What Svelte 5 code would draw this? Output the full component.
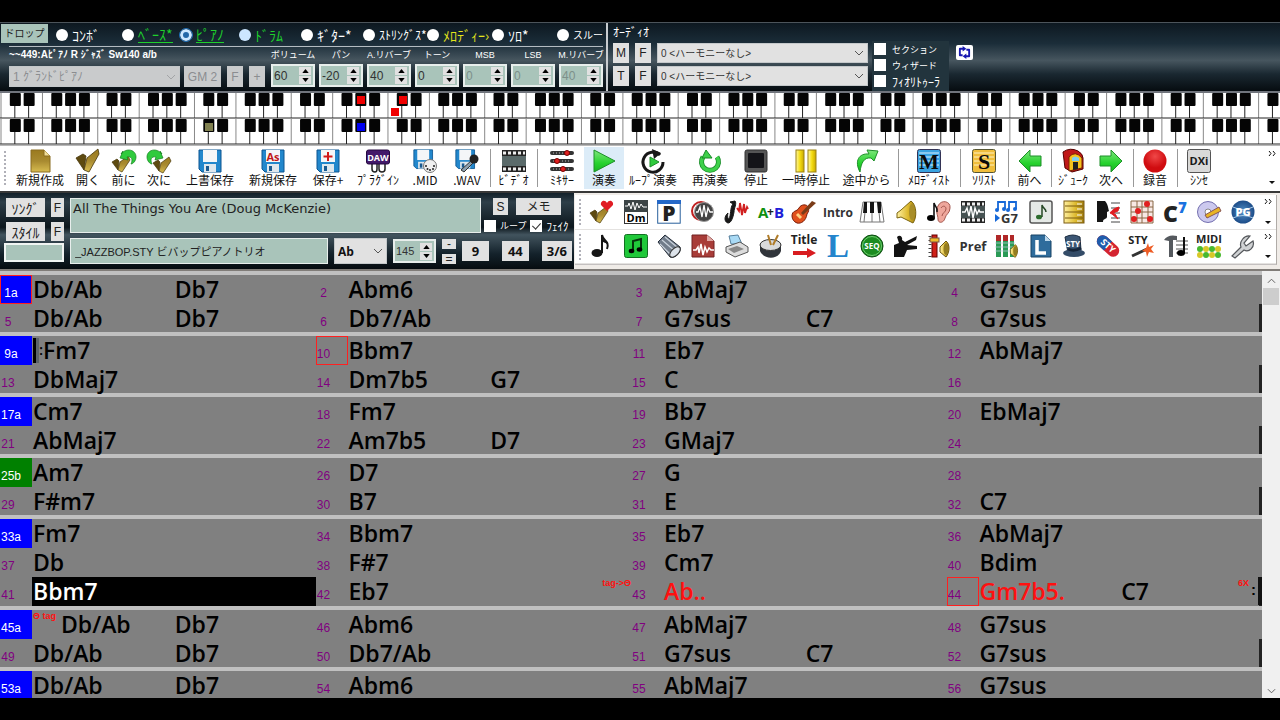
<script>
  const parts = [
    { id: 'combo', name: 'ｺﾝﾎﾞ', tone: 'plain' },
    { id: 'bass', name: 'ﾍﾞｰｽ*', tone: 'green', line: true },
    { id: 'piano', name: 'ﾋﾟｱﾉ', tone: 'green', line: true },
    { id: 'drums', name: 'ﾄﾞﾗﾑ', tone: 'green', hover: true },
    { id: 'guitar', name: 'ｷﾞﾀｰ*', tone: 'plain' },
    { id: 'strings', name: 'ｽﾄﾘﾝｸﾞｽ*', tone: 'plain', small: true },
    { id: 'melody', name: 'ﾒﾛﾃﾞｨｰ›', tone: 'yellow' },
    { id: 'solo', name: 'ｿﾛ*', tone: 'plain' },
    { id: 'thru', name: 'スルー', tone: 'plain', thin: true }
  ];
  let part = 'piano';

  const knobs = [
    { name: 'ボリューム', value: '60' },
    { name: 'パン', value: '-20' },
    { name: 'A.リバーブ', value: '40' },
    { name: 'トーン', value: '0' },
    { name: 'MSB', value: '0', off: true },
    { name: 'LSB', value: '0', off: true },
    { name: 'M.リバーブ', value: '40', off: true }
  ];

  const checks = ['セクション', 'ウィザード', 'ﾌｨｵﾘﾄｩｰﾗ'];

  // keyboards: 7 white keys to an octave
  const keyWidth = 13.82;
  const whites = Array.from({ length: 93 }, (_, i) => 1 + i * keyWidth);
  const blacks = whites.map((x, i) => ({ x, n: i % 7 })).filter((k) => k.n !== 0 && k.n !== 3);
  const keyboards = [
    [
      { x: 357, y: 3, color: '#f00000' },
      { x: 399, y: 3, color: '#f00000' },
      { x: 391, y: 15, color: '#f00000' }
    ],
    [
      { x: 205, y: 4, color: '#808050' },
      { x: 357, y: 4, color: '#0000f0' }
    ]
  ];

  const floppy = '<path d="M1 1h22v22H4l-3-3z" fill="#2287cc" stroke="#0c5590"/><rect x="5" y="1" width="14" height="12" fill="#f4f6f8"/><rect x="6" y="15" width="12" height="8" fill="#dfe8ee"/><rect x="8" y="17" width="3" height="5" fill="#1a5a90"/>';
  const folder = '<path d="M0 9l7-4 3 2-2 14z" fill="#5e4a10" stroke="#46360a" stroke-width=".8"/><path d="M8 21l3-12L22 0l1 5-10 18z" fill="url(#gold)" stroke="#46360a" stroke-width=".8"/>';
  const smallFolder = '<path d="M0 13l5-3 2 2-1 9z" fill="#5e4a10" stroke="#46360a" stroke-width=".7"/><path d="M6 21l2-8 8-6 2 4-8 12z" fill="url(#gold)" stroke="#46360a" stroke-width=".7"/>';
  const film = '<rect y="1" width="24" height="22" fill="#252525"/><path d="M1 4h22M1 20h22" stroke="#eee" stroke-width="3" stroke-dasharray="3 2"/>';
  const speaker = '<path d="M13 13l6-6c4 3 4 11 0 16l-6-5z" fill="url(#brass)" stroke="#6b5510"/><ellipse cx="19" cy="15" rx="2.500" ry="6" fill="#957d20"/>';

  const icons = {
    new: '<path d="M3 1h13l6 6v16H3z" fill="url(#gold)" stroke="#8a6c20"/><path d="M16 1v6h6" fill="#f1df9a" stroke="#8a6c20"/>',
    open: folder,
    prevFile: smallFolder + '<path d="M9 5c6-7 15-4 15 3 0 4-3 7-5 7 2-4 1-8-4-7l1 3-8-2 3-7z" fill="#2fcb3d" stroke="#137c1d" stroke-width=".7"/>',
    nextFile: '<g transform="translate(6 1)">' + smallFolder + '</g><path d="M15 5C9-2 0 1 0 8c0 4 3 7 5 7-2-4-1-8 4-7l-1 3 8-2-3-7z" fill="#2fcb3d" stroke="#137c1d" stroke-width=".7"/>',
    save: floppy,
    saveAs: floppy + '<text x="12" y="12" font-size="11" font-weight="700" text-anchor="middle" fill="#c01818">As</text>',
    savePlus: floppy + '<path d="M12 3v9M7.500 7.500h9" stroke="#d01818" stroke-width="2"/>',
    daw: '<path d="M6 15v5q0 3 3 3 2 0 2-3v-5M13 15v5q0 3 3 3t3-3v-5" fill="none" stroke="#222" stroke-width="1.500"/><rect x=".5" y="1" width="23" height="14" rx="2" fill="#43196a" stroke="#24083f"/><text x="12" y="12" font-size="9" font-weight="700" text-anchor="middle" fill="#fff">DAW</text>',
    mid: '<g transform="scale(.85)">' + floppy + '</g><circle cx="17" cy="17" r="6.500" fill="#f0f0f0" stroke="#777"/><g fill="#222"><circle cx="13" cy="17" r="1"/><circle cx="14.500" cy="20" r="1"/><circle cx="17" cy="21" r="1"/><circle cx="20" cy="20" r="1"/><circle cx="21" cy="17" r="1"/></g>',
    wav: '<g transform="scale(.85)">' + floppy + '</g><path d="M6 21l11-10 2 2-10 10z" fill="#8ca0b0" stroke="#333"/><circle cx="19" cy="10" r="4.500" fill="#222"/>',
    video: film + '<rect y="7" width="24" height="10" fill="#5a6a6a"/>',
    mixer: '<path d="M2 4h20M2 12h20M2 20h20" stroke="#333" stroke-width="4" stroke-linecap="round"/><path d="M3 4h18M3 12h18M3 20h18" stroke="#bbb" stroke-dasharray="1 2"/><g fill="#e02020" stroke="#700"><circle cx="17" cy="4" r="2.500"/><circle cx="7" cy="12" r="2.500"/><circle cx="13" cy="20" r="2.500"/></g>',
    play: '<path d="M2 1l21 11L2 23z" fill="url(#green)" stroke="#1d8f28"/>',
    loop: '<path d="M19 6a10 10 0 1 0 3 7" fill="none" stroke="#181818" stroke-width="3"/><path d="M11 0l9 4-7 6z" fill="#181818"/><path d="M9 8l9 5-9 5z" fill="#2fcb3d" stroke="#1d8f28"/>',
    replay: '<path d="M5 8a8.500 8.500 0 1 0 14 0" fill="none" stroke="#148a24" stroke-width="5"/><path d="M5 8a8.500 8.500 0 1 0 14 0" fill="none" stroke="#3ed04a" stroke-width="3.500"/><path d="M4 9l4-8 6 8z" fill="#3ed04a" stroke="#148a24"/>',
    stop: '<rect x="1" y="1" width="22" height="22" rx="2" fill="#555" stroke="#333"/><rect x="4" y="4" width="16" height="15" rx="1" fill="#141418"/>',
    pause: '<rect x="2" y="1" width="8" height="22" fill="url(#yellow)" stroke="#9a8010"/><rect x="14" y="1" width="8" height="22" fill="url(#yellow)" stroke="#9a8010"/>',
    from: '<path d="M5 23C-1 12 4 4 14 5l-2-4 11 1-4 10-3-3c-7-1-10 5-11 14z" fill="url(#green)" stroke="#1d8f28"/>',
    melodist: '<rect x=".5" y=".5" width="23" height="23" rx="2" fill="#3aa3e0" stroke="#335"/><path d="M2 4h20M2 8h20M2 12h20M2 16h20" stroke="#d8efff"/><text x="12" y="20" font-family="Liberation Serif" font-size="21" font-weight="700" text-anchor="middle" fill="#0a0a0a">M</text>',
    soloist: '<rect x=".5" y=".5" width="23" height="23" rx="2" fill="#f0be3c" stroke="#553"/><path d="M2 4h20M2 8h20M2 12h20M2 16h20" stroke="#fff2c4"/><text x="12" y="20" font-family="Liberation Serif" font-size="22" font-weight="700" text-anchor="middle" fill="#0a0a0a">S</text>',
    left: '<path d="M1 12L12 1v6h11v10H12v6z" fill="url(#green)" stroke="#1d8f28"/>',
    juke: '<path d="M2 3q7-5 15-1 5 3 5 7v11l-11 3-7-4z" fill="#c01818" stroke="#500"/><path d="M8 22V8q6-7 13 1v10z" fill="#f6c21c" stroke="#7a2000"/><path d="M11 9q3-3 7 0v3h-7z" fill="#7fd0f0"/><path d="M12 13h5v7l-5 1z" fill="#222"/>',
    right: '<path d="M23 12L12 1v6H1v10h11v6z" fill="url(#green)" stroke="#1d8f28"/>',
    record: '<circle cx="12" cy="12" r="11.500" fill="url(#red)"/>',
    dxi: '<rect x=".5" y=".5" width="23" height="23" rx="2" fill="#d9d9d9" stroke="#555"/><text x="12" y="16" font-size="11" font-weight="700" text-anchor="middle" fill="#181818">DXi</text>',

    fav: smallFolder + '<path d="M17 11l-6-6c-1-4 4-6 6-2 2-4 7-2 6 2z" fill="#e01c24"/>',
    audioDm: '<rect x=".5" y=".5" width="23" height="23" fill="#fff" stroke="#333"/><rect width="24" height="12" fill="#3c4446"/><path d="M1 6h3l1-3 2 6 2-7 2 8 2-7 2 5 2-4 2 3h4" fill="none" stroke="#fff"/><text x="12" y="22" font-size="11" font-weight="700" text-anchor="middle">Dm</text>',
    p: '<rect x=".7" y=".7" width="22.500" height="22.500" fill="#fff" stroke="#28609c"/><rect width="24" height="4" fill="#2468c8"/><text x="12" y="21" font-size="21" font-weight="800" text-anchor="middle" fill="#222">P</text>',
    wheel: '<circle cx="10" cy="11" r="9" fill="none" stroke="#c02020" stroke-width="2"/><circle cx="13" cy="12" r="9.500" fill="#444" stroke="#999"/><path d="M5 12h2l2-5 2 10 2-12 2 12 2-9 2 4h3" fill="none" stroke="#fff" stroke-width="1.300"/>',
    sax: '<path d="M5 2l5-1c2 3-1 7-1 11-1 6-3 11-6 11-4-1-4-7 0-10-1 3 0 6 1 6 2-3 1-12 4-15z" fill="#181818" stroke="#181818"/><path d="M12 8l2 3 1-8 2 12 2-11 1 9 2-6 1 2" fill="none" stroke="#d02020" stroke-width="1.800"/>',
    ab: '<text x="-1" y="18" font-size="15" font-weight="700" fill="#109010">A</text><text x="8" y="16" font-size="12" font-weight="700" fill="#222">+</text><text x="15" y="18" font-size="15" font-weight="700" fill="#2020d8">B</text>',
    guitar: '<path d="M0 16c0-6 5-4 7-8s8-4 9-1 1 4-1 7c-1 7-6 10-10 9-3-1-5-4-5-7z" fill="#e0501c" stroke="#7a1c08"/><path d="M9 13L20 1l4 2-13 12z" fill="#7a3c18"/><path d="M5 14l4 4" stroke="#ffd080" stroke-width="3"/>',
    intro: '<text x="12" y="17" font-size="12" font-weight="700" text-anchor="middle" fill="#333">Intro</text>',
    keys: '<path d="M3 2h18l3 20H0z" fill="#fff" stroke="#777"/><path d="M6 2L4 22M12 2v20M18 2l2 20" stroke="#777"/><path d="M4 2h3v11H3zM10 2h4v11h-4zM17 2h4v11h-3z" fill="#161616"/>',
    horn: '<path d="M3 13l4-3L17 1c6 4 6 17 2 22L7 17l-4 1z" fill="url(#brass)" stroke="#7a6410"/><ellipse cx="18" cy="12" rx="3" ry="8" fill="#a88d28"/>',
    ear: '<path d="M11 6c3-7 13-5 12 2 0 5-4 6-5 10-1 5-7 6-7 1 0-4-3-8 0-13z" fill="#efa79c" stroke="#a4574e"/><path d="M14 8c2-3 5-2 5 1s-4 4-4 7" fill="none" stroke="#a4574e"/><ellipse cx="4" cy="18" rx="4" ry="3"/><path d="M7 18V3c1 4 4 4 3 9" fill="none" stroke="#111" stroke-width="1.600"/>',
    wave: film + '<rect y="6" width="24" height="12" fill="#465252"/><path d="M1 12h3l2-4 2 8 2-10 2 12 2-10 2 6 2-4 1 2h4" fill="none" stroke="#fff" stroke-width="1.400"/>',
    notesG7: '<path d="M3 10V2h7v7M14 10V2h7v7" fill="none" stroke="#1668d8" stroke-width="1.800"/><g fill="#1668d8"><circle cx="2" cy="10" r="2"/><circle cx="9" cy="9" r="2"/><circle cx="13" cy="10" r="2"/><circle cx="20" cy="9" r="2"/><path d="M0 14l5 4-5 4z"/></g><text x="6" y="23" font-size="13" font-weight="700" fill="#333">G7</text>',
    noteBox: '<rect x="1" y="1" width="22" height="22" rx="2" fill="#e5e9e6" stroke="#555" stroke-width="1.500"/><ellipse cx="10" cy="17" rx="3" ry="2.300" fill="#2c6c2c"/><path d="M13 17V5c1 4 4 3 4 7" fill="none" stroke="#264826" stroke-width="1.500"/>',
    drawers: '<rect x="2" y="1" width="20" height="22" fill="url(#brass)" stroke="#7a5a10"/><path d="M3 6h18M3 12h18M3 18h18" stroke="#7a5a10"/><path d="M15 4h5M15 9h5M15 15h5M15 21h5" stroke="#fff"/>',
    voice: '<path d="M1 1h8c3 3 3 7 4 10l-2 1v5c-1 3-4 1-4 5H1z" fill="#151515"/><path d="M15 3h9M15 8h9M17 13h7M15 18h9M15 22h9" stroke="#444"/><path d="M23 7c-4 1-7 3-9 6 3 1 5 4 8 6-1-2-2-3-2-4l-3-2 5-2z" fill="#e01c20" stroke="#e01c20"/>',
    fret: '<path d="M1 1h22v22H1zM1 7h22M1 12h22M1 18h22M7 1v22M12 1v22M18 1v22" fill="#f8e8e4" stroke="#864"/><g fill="#e02020"><circle cx="17" cy="4" r="3"/><circle cx="8" cy="11" r="3"/><circle cx="4" cy="19" r="3"/><circle cx="20" cy="19" r="3"/></g>',
    c7: '<text x="-1" y="22" font-size="23" font-weight="800" fill="#222">C</text><text x="14" y="13" font-size="15" font-weight="800" fill="#1a72e0">7</text>',
    cd: '<circle cx="11" cy="12" r="10.500" fill="#ccc9ee" stroke="#7470b0"/><circle cx="11" cy="12" r="3" fill="#fff" stroke="#888"/><path d="M8 15L22 7l2 4-14 7z" fill="#e8b424" stroke="#855"/>',
    pg: '<circle cx="12" cy="12" r="11.500" fill="url(#globe)"/><path d="M2 7q10 5 20 0M2 18q10-5 20 0" fill="none" stroke="#a9cbe8"/><text x="12" y="16" font-size="11" font-weight="800" text-anchor="middle" fill="#fff">PG</text>',

    note: '<ellipse cx="7" cy="19" rx="5.500" ry="4" fill="#151515"/><path d="M12 19V1c1 6 8 6 5 14" fill="none" stroke="#151515" stroke-width="2"/><path d="M12 2c2 6 6 5 6 9-2-3-5-2-6-4z" fill="#151515"/>',
    greenNotes: '<rect x=".5" y=".5" width="23" height="23" rx="2" fill="#20c83a" stroke="#127022"/><path d="M9 17V7l8-2v10" fill="none" stroke="#06330c" stroke-width="2"/><ellipse cx="7.500" cy="17" rx="2.800" ry="2.200"/><ellipse cx="15.500" cy="15.500" rx="2.800" ry="2.200"/>',
    tube: '<path d="M1 8L8 1l15 12c2 5-5 12-10 10z" fill="#717c8a" stroke="#27303c"/><path d="M3 10l11 11M5 6l14 12M8 3l13 11" stroke="#c9d2dc" stroke-width="1.200"/><ellipse cx="18" cy="18" rx="6.500" ry="3.500" transform="rotate(-45 18 18)" fill="#dde3ea" stroke="#333"/>',
    wavePage: '<path d="M1 1h15l7 6v16H1z" fill="#a83c38" stroke="#702020"/><path d="M16 1v6h7" fill="#e0a8a4"/><path d="M2 16h3l2-3 1 6 2-9 2 11 2-8 2 5 2-4 2 2h3" fill="none" stroke="#fff" stroke-width="1.500"/>',
    printer: '<path d="M6 10L4 2l9-1 4 9z" fill="#a9daf5" stroke="#58809c"/><path d="M1 13l14-5 8 5v5l-13 5-9-5z" fill="#dcdcdc" stroke="#555"/><path d="M3 15l9-3 7 3-10 4z" fill="#888"/>',
    drum: '<path d="M1 10v7c4 9 18 9 21 0v-7z" fill="#30343a"/><ellipse cx="11.500" cy="11" rx="10.500" ry="5.500" fill="#d9dadb" stroke="#333"/><path d="M12 11L9 1M14 11l5-10" stroke="#b07c28" stroke-width="2"/>',
    title: '<text x="12" y="10" font-size="12" font-weight="700" text-anchor="middle" fill="#222">Title</text><path d="M1 17h14v-3l9 5-9 5v-3H1z" fill="#d81c20"/>',
    bigL: '<text x="12" y="23" font-family="Liberation Serif" font-size="33" font-weight="700" text-anchor="middle" fill="#2484cc">L</text>',
    seq: '<circle cx="12" cy="12" r="11" fill="#1c8c20" stroke="#0b4a10"/><circle cx="12" cy="12" r="9.500" fill="none" stroke="#70cc70"/><text x="12" y="15" font-size="8" font-weight="700" text-anchor="middle" fill="#fff">SEQ</text>',
    conduct: '<path d="M3 3c3-3 6 0 5 3l3 2 12-6-1 4-9 5 10 1v3l-10 1-3 7H0V11l5-2z" fill="#121212"/>',
    levelHorn: '<path d="M3 2v21" stroke="#444" stroke-dasharray="1 3" stroke-width="3"/><rect x="5" y="1" width="5" height="22" fill="#d02018" stroke="#600"/><rect x="3" y="4" width="9" height="4" fill="#f0bc28" stroke="#754"/>' + speaker,
    pref: '<text x="12" y="17" font-size="13" font-weight="700" text-anchor="middle" fill="#333">Pref</text>',
    meters: '<rect x="1" y="1" width="5" height="22" fill="#2a9a56"/><rect x="8" y="1" width="5" height="22" fill="#2a9a56"/><rect x="15" y="1" width="4" height="22" fill="#2a9a56"/><path d="M1 4h5M8 4h5M15 4h4" stroke="#b02828" stroke-width="6"/><path d="M0 9h20M0 13h20M0 17h20" stroke="#bcd" stroke-width=".7"/><g transform="translate(5 5) scale(.8)">' + speaker + '</g>',
    pageL: '<path d="M2 1h14l6 6v16H2z" fill="#2f6c9c" stroke="#184264"/><path d="M16 1v6h6" fill="#bcd8ec"/><path d="M8 6v13h9" fill="none" stroke="#fff" stroke-width="3.500"/>',
    hat: '<path d="M3 3q8-4 15 0l1 13-13 3z" fill="#3b5674" stroke="#1b2c40"/><ellipse cx="12" cy="19" rx="11" ry="4" fill="#344c68"/><path d="M6 15q6 3 13-1" stroke="#17263a" stroke-width="3" fill="none"/><text x="11" y="13" font-size="8" font-weight="700" text-anchor="middle" fill="#fff">STY</text>',
    pill: '<g transform="rotate(42 12 12)"><rect x="-1" y="6" width="26" height="12" rx="6" fill="#d42430"/><path d="M12 6H5a6 6 0 0 0 0 12h7z" fill="#205cac"/><text x="12" y="15" font-size="9" font-weight="700" text-anchor="middle" fill="#fff">STY</text></g>',
    styWand: '<text x="8" y="10" font-size="11" font-weight="700" text-anchor="middle" fill="#222">STY</text><path d="M2 22l15-7" stroke="#333" stroke-width="3"/><path d="M18 9l1 4 5-2-3 4 3 4-5-1-2 5-1-5-4-1 4-3z" fill="#ee5c24"/>',
    hammer: '<path d="M0 6q4-6 13-4v4H9v17H5V7z" fill="#55595e"/><path d="M12 7h12M12 11h12M12 15h12M12 19h12" stroke="#555"/><path d="M20 3v16" stroke="#111" stroke-width="2"/><ellipse cx="17" cy="19" rx="4" ry="3"/>',
    midi: '<text x="12" y="9" font-size="11" font-weight="700" text-anchor="middle" fill="#222">MIDI</text><g fill="#48b830"><circle cx="3" cy="15" r="3"/><circle cx="15" cy="15" r="3"/><circle cx="9" cy="21" r="3"/><circle cx="21" cy="21" r="3"/></g><g fill="#d8c828"><circle cx="9" cy="15" r="3"/><circle cx="21" cy="15" r="3"/><circle cx="3" cy="21" r="3"/><circle cx="15" cy="21" r="3"/></g>',
    wrench: '<path d="M1 22l9-9c-2-5 3-12 9-11l-6 7 2 3 7-5c2 6-4 12-9 9l-9 8z" fill="#d0d2d4" stroke="#55585c" stroke-width="1.200"/>'
  };

  const toolbar = [
    { icon: 'new', label: '新規作成', w: 60 },
    { icon: 'open', label: '開く', w: 36 },
    { icon: 'prevFile', label: '前に', w: 35 },
    { icon: 'nextFile', label: '次に', w: 36 },
    { icon: 'save', label: '上書保存', w: 66 },
    { icon: 'saveAs', label: '新規保存', w: 60 },
    { icon: 'savePlus', label: '保存+', w: 50 },
    { icon: 'daw', label: 'ﾌﾟﾗｸﾞｲﾝ', w: 50 },
    { icon: 'mid', label: '.MID', w: 44 },
    { icon: 'wav', label: '.WAV', w: 40 },
    { sep: true },
    { icon: 'video', label: 'ﾋﾞﾃﾞｵ', w: 41 },
    { sep: true },
    { icon: 'mixer', label: 'ﾐｷｻｰ', w: 44 },
    { icon: 'play', label: '演奏', w: 40, active: true },
    { icon: 'loop', label: 'ﾙｰﾌﾟ演奏', w: 58 },
    { icon: 'replay', label: '再演奏', w: 56 },
    { icon: 'stop', label: '停止', w: 36 },
    { icon: 'pause', label: '一時停止', w: 64 },
    { icon: 'from', label: '途中から', w: 57 },
    { sep: true },
    { icon: 'melodist', label: 'ﾒﾛﾃﾞｨｽﾄ', w: 56 },
    { sep: true },
    { icon: 'soloist', label: 'ｿﾘｽﾄ', w: 42 },
    { sep: true },
    { icon: 'left', label: '前へ', w: 37 },
    { sep: true },
    { icon: 'juke', label: 'ｼﾞｭｰｸ', w: 38 },
    { icon: 'right', label: '次へ', w: 38 },
    { sep: true },
    { icon: 'record', label: '録音', w: 38 },
    { sep: true },
    { icon: 'dxi', label: 'ｼﾝｾ', w: 38 }
  ];

  const palettes = [
    ['fav', 'audioDm', 'p', 'wheel', 'sax', 'ab', 'guitar', 'intro', 'keys', 'horn', 'ear', 'wave', 'notesG7', 'noteBox', 'drawers', 'voice', 'fret', 'c7', 'cd', 'pg'],
    ['note', 'greenNotes', 'tube', 'wavePage', 'printer', 'drum', 'title', 'bigL', 'seq', 'conduct', 'levelHorn', 'pref', 'meters', 'pageL', 'hat', 'pill', 'styWand', 'hammer', 'midi', 'wrench']
  ];

  // each bar: number, first chord, chord on beat 3
  const sections = [
    { mark: 'a', rows: [[[1, 'Db/Ab', 'Db7'], [2, 'Abm6'], [3, 'AbMaj7'], [4, 'G7sus']], [[5, 'Db/Ab', 'Db7'], [6, 'Db7/Ab'], [7, 'G7sus', 'C7'], [8, 'G7sus']]] },
    { mark: 'a', rows: [[[9, 'Fm7'], [10, 'Bbm7'], [11, 'Eb7'], [12, 'AbMaj7']], [[13, 'DbMaj7'], [14, 'Dm7b5', 'G7'], [15, 'C'], [16, '']]] },
    { mark: 'a', rows: [[[17, 'Cm7'], [18, 'Fm7'], [19, 'Bb7'], [20, 'EbMaj7']], [[21, 'AbMaj7'], [22, 'Am7b5', 'D7'], [23, 'GMaj7'], [24, '']]] },
    { mark: 'b', rows: [[[25, 'Am7'], [26, 'D7'], [27, 'G'], [28, '']], [[29, 'F#m7'], [30, 'B7'], [31, 'E'], [32, 'C7']]] },
    { mark: 'a', rows: [[[33, 'Fm7'], [34, 'Bbm7'], [35, 'Eb7'], [36, 'AbMaj7']], [[37, 'Db'], [38, 'F#7'], [39, 'Cm7'], [40, 'Bdim']], [[41, 'Bbm7'], [42, 'Eb7'], [43, 'Ab..'], [44, 'Gm7b5.', 'C7']]] },
    { mark: 'a', rows: [[[45, 'Db/Ab', 'Db7'], [46, 'Abm6'], [47, 'AbMaj7'], [48, 'G7sus']], [[49, 'Db/Ab', 'Db7'], [50, 'Db7/Ab'], [51, 'G7sus', 'C7'], [52, 'G7sus']]] },
    { mark: 'a', rows: [[[53, 'Db/Ab', 'Db7'], [54, 'Abm6'], [55, 'AbMaj7'], [56, 'G7sus']]] }
  ];
  const boxed = [1, 10, 44];
  const rests = [43, 44];
  let current = 41;
</script>

{#snippet icon(name)}
  <svg class="icon" viewBox="0 0 24 24" aria-hidden="true">{@html icons[name]}</svg>
{/snippet}

{#snippet arrows()}
  <span class="arrows">
    <button aria-label="+"><svg viewBox="0 0 8 5"><path d="M4 0l4 5H0z" /></svg></button>
    <button aria-label="-"><svg viewBox="0 0 8 5"><path d="M0 0h8L4 5z" /></svg></button>
  </span>
{/snippet}

{#snippet more()}
  <button class="more" aria-label="…">
    <svg viewBox="0 0 8 7"><path d="M1 1l2 2.500L1 6M5 1l2 2.500L5 6" /></svg>
    <svg viewBox="0 0 8 7"><path class="solid" d="M1 2h6L4 5z" /></svg>
  </button>
{/snippet}

<svg class="defs" width="0" height="0" aria-hidden="true">
  <defs>
    <linearGradient id="gold" x2="0" y2="1"><stop stop-color="#9a7a1e" /><stop offset=".5" stop-color="#a88a30" /><stop offset="1" stop-color="#d8bc50" /></linearGradient>
    <linearGradient id="brass"><stop stop-color="#fff0a0" /><stop offset=".6" stop-color="#dcb82c" /><stop offset="1" stop-color="#a07c10" /></linearGradient>
    <linearGradient id="green" x2="0" y2="1"><stop stop-color="#7ee67c" /><stop offset=".6" stop-color="#26d22e" /><stop offset="1" stop-color="#16b420" /></linearGradient>
    <linearGradient id="yellow"><stop stop-color="#fff8a0" /><stop offset=".5" stop-color="#f4dc10" /><stop offset="1" stop-color="#c8a800" /></linearGradient>
    <radialGradient id="red" cy=".3"><stop stop-color="#f04848" /><stop offset="1" stop-color="#d00c10" /></radialGradient>
    <radialGradient id="globe"><stop stop-color="#5290c8" /><stop offset="1" stop-color="#1c4c88" /></radialGradient>
  </defs>
</svg>

<main>
  <section class="mixer">
    <div class="tracks">
      <div class="parts">
        <button class="drop">ドロップ</button>
        <div class="radios">
          {#each parts as p}
            <label class={p.tone} class:small={p.small} class:thin={p.thin}>
              <input type="radio" name="part" value={p.id} class:hover={p.hover} bind:group={part} />
              <span class:line={p.line}>{p.name}</span>
            </label>
          {/each}
        </div>
      </div>
      <div class="patch-row">
        <div class="patch">
          <span class="patch-name">~~449:Aﾋﾟｱﾉ R ｼﾞｬｽﾞ Sw140 a/b</span>
          <div class="patch-controls">
            <div class="drop-down off">
              <select aria-label="patch" disabled><option>1 ｸﾞﾗﾝﾄﾞﾋﾟｱﾉ</option></select>
              <svg viewBox="0 0 10 6"><path d="M1 1l4 4 4-4" /></svg>
            </div>
            <button class="grey gm" disabled>GM 2</button>
            <button class="grey one" disabled>F</button>
            <button class="grey one" disabled>+</button>
          </div>
        </div>
        <div class="knobs">
          {#each knobs as k, i}
            <div class="knob">
              <label for="knob{i}">{k.name}</label>
              <div class="spin" class:off={k.off}>
                <input id="knob{i}" type="text" value={k.value} disabled={k.off} />
                {@render arrows()}
              </div>
            </div>
          {/each}
        </div>
      </div>
    </div>
    <div class="audio">
      <span class="audio-title">ｵｰﾃﾞｨｵ</span>
      {#each ['M', 'T'] as key}
        <div class="harmony">
          <button>{key}</button>
          <button>F</button>
          <div class="drop-down">
            <select aria-label="harmony {key}"><option>0 &lt;ハーモニーなし&gt;</option></select>
            <svg viewBox="0 0 10 6"><path d="M1 1l4 4 4-4" /></svg>
          </div>
        </div>
      {/each}
    </div>
    <div class="options">
      {#each checks as c}
        <label><input type="checkbox" />{c}</label>
      {/each}
    </div>
    <button class="refresh" aria-label="refresh">
      <svg viewBox="0 0 16 14"><path d="M7 3H3v7h3M9 11h4V4h-3" /><path class="solid" d="M6 0v6l4-3zM10 8v6l-4-3z" /></svg>
    </button>
  </section>

  <section class="keyboards">
    {#each keyboards as marks}
      <svg viewBox="0 0 1280 26" preserveAspectRatio="none">
        <rect width="1280" height="26" fill="#fff" />
        {#each whites as x, i}
          <path d="M{x} 0V25" stroke={i % 7 === 0 || i % 7 === 3 ? '#888' : '#222'} />
        {/each}
        <path d="M0 25H1280" stroke="#222" stroke-width="1" />
        {#each blacks as k}
          <rect x={k.x - 5} y="0" width="11" height="13" rx="1" fill="#050505" />
        {/each}
        {#each marks as m}
          <rect x={m.x} y={m.y} width="8" height="8" fill={m.color} />
        {/each}
      </svg>
    {/each}
  </section>

  <nav class="toolbar">
    <span class="grip"></span>
    {#each toolbar as t}
      {#if t.sep}
        <span class="sep"></span>
      {:else}
        <button class="tool" class:active={t.active} style="width: {t.w}px">
          {@render icon(t.icon)}
          <span>{t.label}</span>
        </button>
      {/if}
    {/each}
    {@render more()}
  </nav>

  <section class="song">
    <div class="song-panel">
      <div class="names">
        <div class="name-row"><button class="wide">ｿﾝｸﾞ</button><button class="f">F</button></div>
        <div class="name-row"><button class="wide">ｽﾀｲﾙ</button><button class="f">F</button></div>
        <input class="search" type="text" aria-label="search" />
      </div>
      <div class="fields">
        <div class="title-row">
          <textarea aria-label="song title" rows="1">All The Things You Are (Doug McKenzie)</textarea>
          <div class="memo">
            <div class="memo-row"><button class="s">S</button><button class="memo-btn">メモ</button></div>
            <div class="memo-row checks">
              <label><input type="checkbox" />ループ</label>
              <label><input type="checkbox" checked />ﾌｪｲｸ</label>
            </div>
          </div>
        </div>
        <div class="style-row">
          <input class="style-name" type="text" aria-label="style" value="_JAZZBOP.STY ビバップピアノトリオ" />
          <div class="drop-down key">
            <select aria-label="key"><option>Ab</option></select>
            <svg viewBox="0 0 10 6"><path d="M1 1l4 4 4-4" /></svg>
          </div>
          <div class="spin tempo">
            <input type="text" aria-label="tempo" value="145" />
            {@render arrows()}
          </div>
          <div class="tiny"><button>-</button><button>=</button></div>
          <div class="counts">
            <button>9</button>
            <button>44</button>
            <button>3/6</button>
          </div>
        </div>
      </div>
    </div>
    <div class="palettes">
      {#each palettes as row}
        <div class="palette">
          <span class="grip"></span>
          <div class="palette-icons">
            {#each row as name}
              <button aria-label={name}>{@render icon(name)}</button>
            {/each}
          </div>
          {@render more()}
        </div>
      {/each}
    </div>
  </section>

  <section class="sheet">
    <div class="bars">
      {#each sections as s}
        <div class="part">
          {#each s.rows as row, r}
            <div class="row" class:last={r > 0 && r === s.rows.length - 1}>
              {#each row as [n, first, second], i}
                <div class="bar" class:current={n === current} class:rest={rests.includes(n)}>
                  <span class="num {r === 0 && i === 0 ? `mark-${s.mark}` : ''}" class:boxed={boxed.includes(n)}>
                    <span>{n}{r === 0 && i === 0 ? s.mark : ''}</span>
                  </span>
                  <span class="chord" class:indent={n === 45}>
                    {#if n === 9}<span class="repeat"></span><span class="colon">:</span>{/if}{first}
                  </span>
                  <span class="chord second">{second ?? ''}</span>
                  {#if n === 42}<span class="tag end">tag-&gt;<b>Θ</b></span>{/if}
                  {#if n === 45}<span class="tag start"><b>Θ</b> tag</span>{/if}
                  {#if n === 44}<span class="tag times">6X</span><span class="close">:</span>{/if}
                </div>
              {/each}
            </div>
          {/each}
        </div>
      {/each}
    </div>
    <div class="scroll">
      <button aria-label="up"><svg viewBox="0 0 10 6"><path d="M1 5l4-4 4 4" /></svg></button>
      <span class="thumb"></span>
      <button class="down" aria-label="down"><svg viewBox="0 0 10 6"><path d="M1 1l4 4 4-4" /></svg></button>
    </div>
  </section>
</main>

<style>
  :global(body) {
    background: #000;
  }

  main {
    box-sizing: border-box;
    height: 100vh;
    padding: 22px 0;
    display: flex;
    flex-direction: column;
    background: #000;
    font-family: "Liberation Sans", "Noto Sans CJK JP", sans-serif;
    font-size: 12px;
    overflow: hidden;
  }

  main * {
    box-sizing: border-box;
  }

  button, input, select, textarea {
    font: inherit;
    margin: 0;
    padding: 0;
    border: 0;
    border-radius: 0;
    color: #222;
  }

  button {
    background: #e1e1e1;
    line-height: 1;
    white-space: nowrap;
  }

  .defs {
    position: absolute;
  }

  .icon {
    width: 24px;
    height: 24px;
    display: block;
    overflow: visible;
    font-family: "Open Sans", sans-serif;
  }

  /* mixer strip */
  .mixer {
    height: 69px;
    flex: none;
    display: flex;
    border-top: 1px solid #4c545a;
    background: linear-gradient(#0d1820, #1b2d39 30%, #47565f 55%, #1a2831 75%, #060c10);
    color: #fff;
  }

  .tracks {
    width: 608px;
    flex: none;
    border-right: 2px solid #c8ccd0;
  }

  .parts {
    display: flex;
    height: 23px;
  }

  .drop {
    width: 47px;
    height: 19px;
    margin: 1px 8px 0 1px;
    background: #a9c4ba;
    font-size: 10px;
  }

  .radios {
    flex: 1;
    display: grid;
    grid-template-columns: 66px 58px 59px 62px 62px 64px 65px 65px 49px;
    align-items: center;
  }

  .radios label {
    display: flex;
    align-items: center;
    gap: 4px;
    font-size: 14px;
    line-height: 16px;
    white-space: nowrap;
    font-family: "Noto Sans CJK JP", sans-serif;
  }

  .radios .small {
    font-size: 12px;
  }

  .radios .thin {
    font-size: 10px;
  }

  .radios input {
    appearance: none;
    width: 12px;
    height: 12px;
    flex: none;
    border-radius: 50%;
    background: #fff;
  }

  .radios input:checked {
    background: #2468a8;
    border: 3px solid #cfe8ff;
    outline: 1px solid #2070b8;
  }

  .radios input.hover {
    background: #cce6ff;
  }

  .green {
    color: #1fd02c;
  }

  .yellow {
    color: #e4e41c;
  }

  .line {
    border-bottom: 1px solid #1fd02c;
  }

  .patch-row {
    display: flex;
    border-top: 1px solid #b4bcc2;
    margin: 0 3px 0 9px;
    padding-top: 1px;
  }

  .patch {
    width: 262px;
    flex: none;
  }

  .patch-name {
    display: block;
    height: 18px;
    font-size: 10px;
    line-height: 14px;
    font-weight: 700;
  }

  .patch-controls {
    display: flex;
    gap: 6px;
    height: 21px;
  }

  .patch-controls .drop-down {
    width: 171px;
    margin-right: -2px;
  }

  .gm {
    width: 37px;
  }

  .one {
    width: 16px;
  }

  .grey {
    background: #c9cbcc;
    color: #8b8d90;
  }

  .drop-down {
    position: relative;
    display: flex;
    background: #e1e1e1;
    border: 1px solid #c4c8ca;
  }

  .drop-down select {
    appearance: none;
    width: 100%;
    padding-left: 3px;
    background: transparent;
    color: #333;
    font-size: 10px;
    opacity: 1;
  }

  .drop-down svg {
    position: absolute;
    right: 3px;
    top: calc(50% - 3px);
    width: 10px;
    height: 6px;
    pointer-events: none;
  }

  .drop-down path, .scroll path {
    fill: none;
    stroke: #555;
    stroke-width: 1;
  }

  .drop-down.off {
    background: #c9cbcc;
  }

  .drop-down.off select {
    color: #8b8d90;
    font-size: 12px;
  }

  .drop-down.off path {
    stroke: #a2a4a6;
  }

  .knobs {
    flex: 1;
    display: flex;
    justify-content: space-between;
  }

  .knob {
    width: 44px;
    display: flex;
    flex-direction: column;
    align-items: center;
  }

  .knob label {
    height: 16px;
    font-size: 9px;
    line-height: 14px;
    white-space: nowrap;
  }

  .spin {
    width: 100%;
    height: 23px;
    display: flex;
    align-items: center;
    background: #a9c4ba;
    border: 2px solid #e8eeec;
  }

  .spin input {
    flex: 1;
    min-width: 0;
    background: transparent;
    font-size: 12px;
    padding-left: 1px;
    color: #333;
  }

  .spin.off input {
    color: #7d908a;
  }

  .arrows {
    display: flex;
    flex-direction: column;
    gap: 1px;
    margin-right: 2px;
  }

  .arrows button {
    width: 12px;
    height: 8px;
    display: flex;
    align-items: center;
    justify-content: center;
  }

  .arrows svg {
    width: 7px;
    height: 4px;
  }

  .audio {
    width: 264px;
    flex: none;
    padding: 2px 4px 0 5px;
  }

  .audio-title {
    display: block;
    height: 18px;
    font-size: 12px;
    line-height: 14px;
    font-family: "Noto Sans CJK JP", sans-serif;
  }

  .harmony {
    display: flex;
    gap: 6px;
    height: 20px;
    margin-bottom: 3px;
  }

  .harmony button {
    width: 16px;
  }

  .harmony .drop-down {
    flex: 1;
  }

  .options {
    margin-top: 18px;
    width: 77px;
    flex: none;
    display: flex;
    flex-direction: column;
    background: #22343d;
  }

  .options label {
    display: flex;
    align-items: center;
    gap: 6px;
    height: 16px;
    font-size: 9px;
    white-space: nowrap;
    margin-left: 2px;
  }

  .options input, .checks input {
    appearance: none;
    width: 12px;
    height: 12px;
    flex: none;
    background: #fff;
  }

  .options label:last-child {
    font-size: 12px;
  }

  .refresh {
    width: 17px;
    height: 15px;
    margin: 22px 0 0 7px;
    background: #fff;
    border-radius: 2px;
  }

  .refresh svg {
    display: block;
    width: 15px;
    height: 13px;
    margin: 0 auto;
  }

  .refresh path {
    fill: none;
    stroke: #1818b0;
    stroke-width: 2;
    stroke-linejoin: round;
  }

  .refresh .solid {
    fill: #1818b0;
    stroke: none;
  }

  /* keyboards */
  .keyboards {
    flex: none;
    display: flex;
    flex-direction: column;
    border-top: 2px solid #70747c;
    background: #fff;
  }

  .keyboards svg {
    width: 100%;
    height: 26px;
  }

  /* main toolbar */
  .toolbar {
    flex: none;
    height: 48px;
    display: flex;
    align-items: stretch;
    padding: 1px 0 2px;
    background: #fff;
    border-top: 1px solid #b8b8b8;
    border-bottom: 2px solid #383838;
  }

  .grip {
    width: 10px;
    flex: none;
    margin: 3px 0;
    background: radial-gradient(circle, #b0b0b8 1px, transparent 1px) 0 0 / 10px 4px;
  }

  .tool {
    flex: none;
    display: flex;
    flex-direction: column;
    align-items: center;
    justify-content: flex-start;
    padding-top: 2px;
    background: transparent;
    line-height: 14px;
    font-family: "Noto Sans CJK JP", sans-serif;
    color: #111;
  }

  .active {
    background: #dcecf8;
  }

  .sep {
    width: 6px;
    flex: none;
    margin: 2px 0;
    background: linear-gradient(#999, #999) center / 1px 100% no-repeat;
  }

  .more {
    width: 16px;
    margin-left: auto;
    flex: none;
    display: flex;
    flex-direction: column;
    align-items: center;
    justify-content: space-between;
    padding: 3px 0;
    background: transparent;
  }

  .more svg {
    width: 8px;
    height: 7px;
  }

  .more path {
    fill: none;
    stroke: #111;
    stroke-width: 1;
  }

  .more .solid {
    fill: #111;
    stroke: none;
  }

  /* song panel */
  .song {
    flex: none;
    height: 78px;
    display: flex;
    background: #f0ece8;
    border-bottom: 2px solid #807c78;
  }

  .song-panel {
    width: 574px;
    flex: none;
    display: flex;
    gap: 6px;
    padding: 5px 2px 4px 4px;
    background: linear-gradient(#13212a, #2e3e48 12%, #0c161c 45%, #42545e 55%, #14222b 80%, #060c10);
    color: #fff;
  }

  .names {
    width: 60px;
    display: flex;
    flex-direction: column;
    gap: 5px;
  }

  .name-row {
    display: flex;
    gap: 6px;
    height: 19px;
    padding-left: 2px;
  }

  .wide {
    width: 39px;
    font-size: 14px;
    font-family: "Noto Sans CJK JP", sans-serif;
  }

  .f {
    width: 13px;
  }

  .search {
    width: 100%;
    height: 19px;
    background: #a9c4ba;
    border: 2px solid #f0f4f2;
    margin-top: -3px;
  }

  .fields {
    flex: 1;
    min-width: 0;
    display: flex;
    flex-direction: column;
    gap: 5px;
  }

  .title-row {
    display: flex;
    gap: 3px;
    height: 35px;
  }

  .title-row textarea {
    flex: 1;
    resize: none;
    background: #a9c4ba;
    border: 1px solid #e8eeec;
    padding: 2px;
    font-family: "DejaVu Sans", sans-serif;
    font-size: 13px;
    line-height: 16px;
    overflow: hidden;
  }

  .memo {
    width: 88px;
    display: flex;
    flex-direction: column;
    gap: 5px;
  }

  .memo-row {
    display: flex;
    gap: 8px;
    height: 17px;
    padding-left: 9px;
  }

  .memo-row.checks {
    height: 12px;
    padding: 0;
    gap: 4px;
    align-items: center;
  }

  .s {
    width: 15px;
  }

  .memo-btn {
    width: 45px;
  }

  .checks label {
    display: flex;
    align-items: center;
    gap: 4px;
    font-size: 9px;
    line-height: 12px;
    white-space: nowrap;
    font-family: "Noto Sans CJK JP", sans-serif;
  }

  .checks label:last-child {
    font-size: 11px;
  }

  .checks input:checked::after {
    content: "";
    display: block;
    width: 4px;
    height: 7px;
    margin: 1px 0 0 4px;
    border: solid #333;
    border-width: 0 1px 1px 0;
    transform: rotate(42deg);
  }

  .style-row {
    display: flex;
    gap: 6px;
    height: 26px;
    align-items: center;
  }

  .style-name {
    width: 258px;
    height: 26px;
    background: #a9c4ba;
    border: 1px solid #e8eeec;
    padding-left: 4px;
    font-size: 11px;
  }

  .key {
    width: 53px;
    height: 26px;
  }

  .key select {
    font-family: "Open Sans", sans-serif;
    font-weight: 700;
    font-size: 12px;
    color: #111;
  }

  .tempo {
    width: 43px;
    height: 24px;
  }

  .tempo input {
    font-size: 11px;
  }

  .tiny {
    display: flex;
    flex-direction: column;
    gap: 5px;
  }

  .tiny button {
    width: 14px;
    height: 10px;
    line-height: 8px;
  }

  .counts {
    flex: 1;
    display: flex;
    justify-content: space-between;
  }

  .counts button {
    min-width: 27px;
    height: 20px;
    padding: 0 5px;
    font-weight: 700;
    font-size: 13px;
    font-family: "Open Sans", sans-serif;
    color: #111;
  }

  /* icon palettes */
  .palettes {
    flex: 1;
    min-width: 0;
    display: flex;
    flex-direction: column;
    margin: 2px 3px 4px 1px;
    border-right: 1px solid #b0aca8;
    border-bottom: 1px solid #c4c0c0;
    background: #fff;
  }

  .palette {
    flex: 1;
    display: flex;
    border-bottom: 1px solid #e4e2e0;
  }

  .palette-icons {
    flex: 1;
    display: flex;
  }

  .palette-icons button {
    flex: 1;
    display: flex;
    align-items: center;
    justify-content: center;
    background: transparent;
  }

  /* chord sheet */
  .sheet {
    flex: 1;
    min-height: 0;
    display: flex;
    background: #808080;
  }

  .bars {
    flex: 1;
    overflow: hidden;
  }

  .part {
    border-top: 4px solid #c0c0c0;
  }

  .row {
    display: grid;
    grid-template-columns: repeat(4, 1fr);
    height: 29px;
  }

  .row:nth-child(2):last-child {
    height: 28px;
  }

  .row.last {
    box-shadow: inset -3px 0 #222;
  }

  .bar {
    position: relative;
    display: grid;
    grid-template-columns: 32px 1fr 1fr;
  }

  .num {
    padding: 8px 0 0 1px;
    color: #800080;
    line-height: 18px;
    border: 1px solid transparent;
  }

  .num span {
    display: block;
    width: 12px;
    display: flex;
    justify-content: center;
  }

  .num.mark-a, .num.mark-b {
    background: #0000ff;
    color: #fff;
  }

  .num.mark-b {
    background: #008000;
  }

  .num.mark-a span, .num.mark-b span {
    width: 18px;
  }

  .num.boxed {
    border-color: #ff2020;
  }

  .chord {
    display: flex;
    padding-left: 1px;
    font-family: "Comic Sans MS", "Open Sans", sans-serif;
    font-size: 23px;
    font-weight: 600;
    line-height: 28px;
    color: #000;
    white-space: nowrap;
  }

  .chord.indent {
    padding-left: 29px;
  }

  .current .chord {
    background: #000;
    color: #fff;
  }

  .rest .chord:not(.second) {
    color: #ff1010;
  }

  .repeat {
    width: 6px;
    margin: 2px 0;
    border-left: 3px solid #000;
    background: #5c6468;
  }

  .colon {
    width: 4px;
    font-size: 15px;
    line-height: 26px;
  }

  .tag {
    position: absolute;
    top: 0;
    color: #ff1010;
    font-size: 9px;
    font-weight: 700;
    line-height: 12px;
  }

  .tag.end {
    right: 0;
  }

  .tag.start {
    left: 33px;
  }

  .tag.times {
    right: 13px;
  }

  .close {
    position: absolute;
    right: 0;
    top: 0;
    height: 28px;
    padding-right: 2px;
    border-right: 4px solid #111;
    font-weight: 700;
    font-size: 15px;
    line-height: 26px;
  }

  .scroll {
    width: 18px;
    flex: none;
    display: flex;
    flex-direction: column;
    align-items: stretch;
    background: #f0f0f0;
  }

  .scroll button {
    height: 17px;
    background: #f0f0f0;
  }

  .scroll svg {
    width: 9px;
    height: 6px;
  }

  .thumb {
    height: 17px;
    margin: 0 1px;
    background: #cdcdcd;
  }

  .down {
    margin-top: auto;
  }
</style>
